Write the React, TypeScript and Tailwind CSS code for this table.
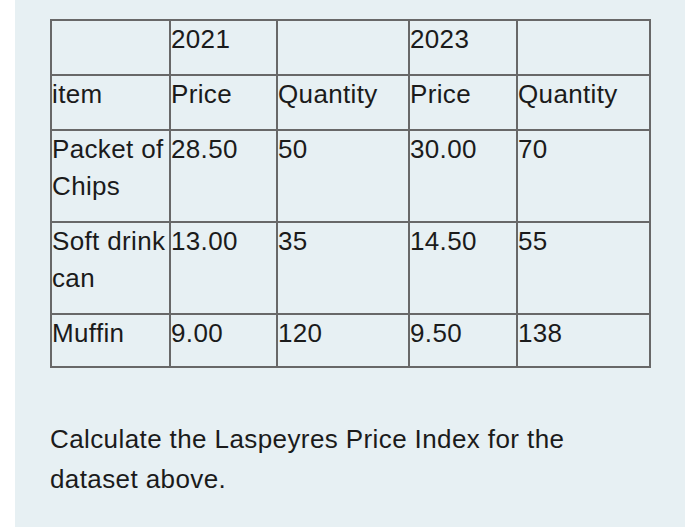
import React from "react";

const rows: string[][] = [
  ["", "2021", "", "2023", ""],
  ["item", "Price", "Quantity", "Price", "Quantity"],
  ["Packet of Chips", "28.50", "50", "30.00", "70"],
  ["Soft drink can", "13.00", "35", "14.50", "55"],
  ["Muffin", "9.00", "120", "9.50", "138"],
];

export default function App() {
  return (
    <div className="w-[700px] h-[529px] bg-white">
      <div
        className="ml-[15px] w-[670px] h-[527px] bg-[#e7f0f3] pl-[35px] pt-[19px] text-[#1b1b1b]"
        style={{ fontFamily: '"Liberation Sans", Arial, sans-serif' }}
      >
        <table className="table-fixed border-collapse border-2 border-[#686868] w-[599px]">
          <colgroup>
            <col className="w-[119px]" />
            <col className="w-[107px]" />
            <col className="w-[132px]" />
            <col className="w-[108px]" />
            <col className="w-[133px]" />
          </colgroup>
          <tbody>
            {rows.map((r, i) => (
              <tr key={i}>
                {r.map((c, j) => (
                  <td
                    key={j}
                    className={`border-2 border-[#686868] align-top p-0 text-[26px] tracking-[0.35px] leading-[37px] ${
                      i === rows.length - 1 ? "pb-[14px]" : "pb-[16px]"
                    }`}
                  >
                    {c}
                  </td>
                ))}
              </tr>
            ))}
          </tbody>
        </table>
        <p className="mt-[51px] w-[560px] text-[26px] tracking-[0.4px] leading-[40px]">
          Calculate the Laspeyres Price Index for the dataset above.
        </p>
      </div>
    </div>
  );
}
